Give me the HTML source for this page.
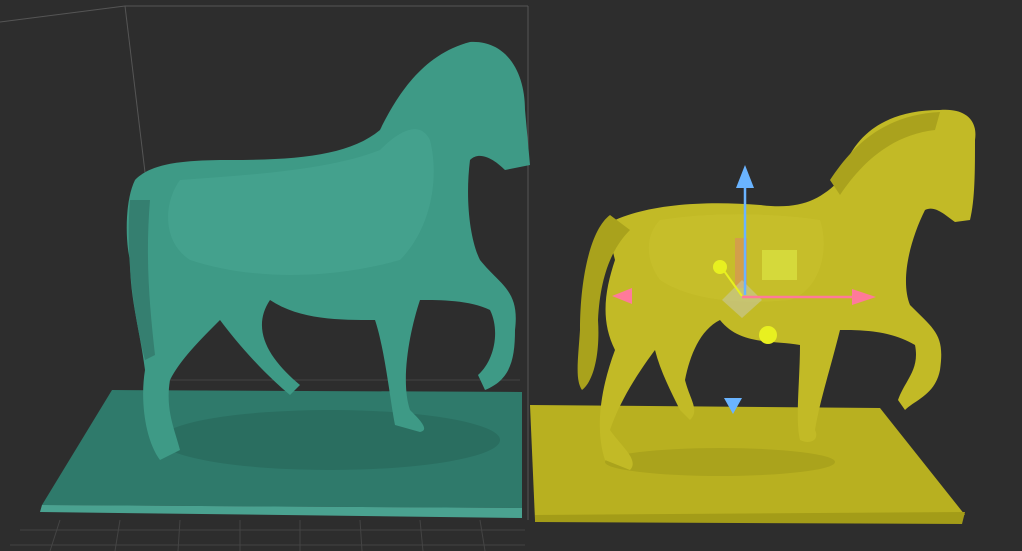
<!DOCTYPE html>
<html><head><style>
html,body{margin:0;padding:0;background:#2d2d2d;width:1022px;height:551px;overflow:hidden}
svg{display:block}
</style></head><body>
<svg width="1022" height="551" viewBox="0 0 1022 551" xmlns="http://www.w3.org/2000/svg">
<rect width="1022" height="551" fill="#2d2d2d"/>
<g stroke="#555" stroke-width="1" fill="none">
<line x1="0" y1="22" x2="125" y2="6"/>
<line x1="125" y1="6" x2="528" y2="6"/>
<line x1="528" y1="6" x2="528" y2="520"/>
<line x1="125" y1="6" x2="170" y2="380"/>
</g>
<g stroke="#444" stroke-width="1">
<line x1="20" y1="530" x2="525" y2="530"/>
<line x1="10" y1="545" x2="525" y2="545"/>
<line x1="60" y1="520" x2="50" y2="551"/>
<line x1="120" y1="520" x2="115" y2="551"/>
<line x1="180" y1="520" x2="178" y2="551"/>
<line x1="240" y1="520" x2="240" y2="551"/>
<line x1="300" y1="520" x2="300" y2="551"/>
<line x1="360" y1="520" x2="362" y2="551"/>
<line x1="420" y1="520" x2="423" y2="551"/>
<line x1="480" y1="520" x2="485" y2="551"/>
<line x1="170" y1="380" x2="520" y2="380"/>
</g>
<polygon points="42,505 112,390 522,392 522,508" fill="#2f7a6b"/>
<polygon points="42,505 522,508 522,518 40,512" fill="#4aa290"/>
<ellipse cx="330" cy="440" rx="170" ry="30" fill="#2a6e60"/>
<path d="M135,180 C150,165 175,160 230,160 C300,160 350,155 380,130 C395,100 420,55 470,42 C505,40 525,70 525,110 L530,165 L505,170 C495,160 480,150 470,160 C465,200 470,240 480,260 C500,285 520,290 515,330 C515,360 510,380 485,390 L478,375 C495,360 500,330 490,310 C470,300 440,300 420,300 C410,330 400,380 410,410 C420,420 430,430 420,432 L395,425 C390,400 385,350 375,320 C340,320 300,320 270,300 C250,330 270,360 300,385 L290,395 C260,370 235,340 220,320 C200,340 180,360 170,380 C165,410 175,430 180,450 L160,460 C145,440 140,400 145,370 C140,330 130,300 130,260 C125,240 125,200 135,180 Z" fill="#3e9a86"/>
<path d="M180,180 C250,175 330,170 380,150 C400,130 420,120 430,140 C440,180 430,230 400,260 C330,280 250,280 190,260 C160,240 165,200 180,180 Z" fill="#4fb09a" opacity="0.35"/>
<path d="M130,200 C125,260 135,320 145,360 L155,355 C150,310 145,260 150,200 Z" fill="#357f70"/>
<polygon points="530,405 880,408 965,515 535,520" fill="#b8b020"/>
<polygon points="535,515 965,512 962,524 535,522" fill="#a39c18"/>
<ellipse cx="720" cy="462" rx="115" ry="14" fill="#aaa31c"/>
<path d="M605,225 C640,205 700,200 760,205 C800,210 820,200 840,180 C850,140 880,110 940,110 C965,108 978,120 975,140 C975,170 975,200 970,220 L955,222 C945,215 935,205 925,210 C910,240 900,280 910,305 C935,330 945,335 940,370 C935,395 915,400 905,410 L898,400 C905,380 920,370 915,345 C890,330 860,330 840,330 C830,370 820,400 815,430 C820,440 810,445 800,440 C795,420 800,380 800,345 C770,340 740,345 720,320 C700,330 690,355 685,380 C690,400 700,410 690,420 L680,410 C670,390 660,370 655,350 C640,370 620,400 610,430 C620,445 640,460 630,470 L605,460 C595,430 600,390 615,350 C600,320 605,290 615,260 L610,240 Z" fill="#c2ba26"/>
<path d="M610,215 C590,230 580,280 580,330 C578,360 575,380 582,390 C595,380 600,350 598,320 C600,280 610,250 630,230 Z" fill="#a9a21c"/>
<path d="M660,220 C720,210 790,215 820,220 C830,250 820,290 790,300 C740,305 690,300 660,280 C645,260 645,235 660,220 Z" fill="#cfc635" opacity="0.3"/>
<path d="M830,180 C850,150 880,115 940,112 L935,130 C890,135 860,165 840,195 Z" fill="#aaa21d"/>
<rect x="762" y="250" width="35" height="30" fill="#d8e040" opacity="0.8"/>
<rect x="735" y="238" width="12" height="50" fill="#e0806a" opacity="0.5"/>
<polygon points="722,300 742,280 762,300 742,318" fill="#c8c8a0" opacity="0.6"/>
<line x1="745" y1="295" x2="745" y2="185" stroke="#6ab4ff" stroke-width="2.5"/>
<polygon points="745,165 736,188 754,188" fill="#6ab4ff"/>
<line x1="742" y1="297" x2="855" y2="297" stroke="#ff7a9a" stroke-width="2.5"/>
<polygon points="876,297 852,289 852,305" fill="#ff7a9a"/>
<polygon points="612,296 632,288 632,304" fill="#ff7a9a"/>
<line x1="742" y1="296" x2="722" y2="268" stroke="#e8f020" stroke-width="2"/>
<circle cx="720" cy="267" r="7" fill="#e8f020"/>
<circle cx="768" cy="335" r="9" fill="#e8f020"/>
<polygon points="724,398 742,398 733,414" fill="#6ab4ff"/>
</svg>
</body></html>
